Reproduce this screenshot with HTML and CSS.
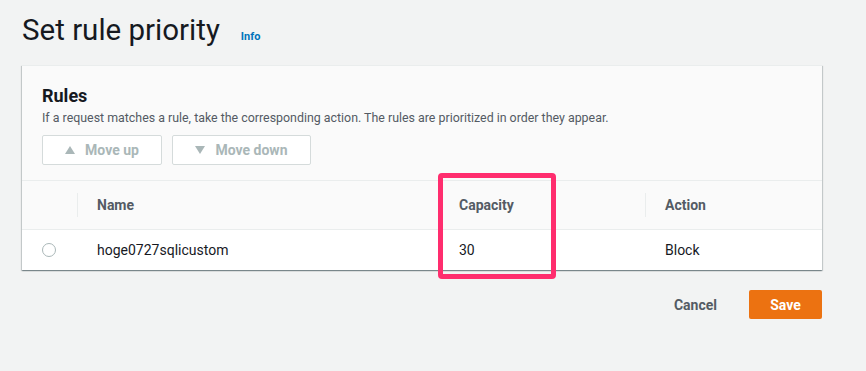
FILE: index.html
```html
<!DOCTYPE html>
<html lang="en">

<head>
    <meta charset="UTF-8">
    <meta name="viewport" content="width=device-width, initial-scale=1.0">
    <link rel="stylesheet" href="styles.css">
    <title>Set rule priority</title>
</head>

<body>
    <div class="page">
        <div class="page-header">
            <h1 class="page-title">Set rule priority</h1>
            <a href="#" class="info-link">Info</a>
        </div>

        <div class="card">
            <div class="card-header">
                <h2 class="card-title">Rules</h2>
                <p class="card-desc">If a request matches a rule, take the corresponding action. The rules are prioritized in order they appear.</p>
                <div class="button-group">
                    <button type="button" class="btn-disabled btn-up" disabled>
                        <svg class="caret" width="10" height="8" viewBox="0 0 10 8"><path d="M5 0 L10 8 L0 8 Z" fill="currentColor"/></svg>Move up
                    </button>
                    <button type="button" class="btn-disabled btn-down" disabled>
                        <svg class="caret" width="10" height="8" viewBox="0 0 10 8"><path d="M0 0 L10 0 L5 8 Z" fill="currentColor"/></svg>Move down
                    </button>
                </div>
            </div>

            <div class="table">
                <div class="row head-row">
                    <div class="cell col-select"></div>
                    <div class="cell col-name"><span class="sep"></span>Name</div>
                    <div class="cell col-capacity"><span class="sep"></span>Capacity</div>
                    <div class="cell col-action"><span class="sep"></span>Action</div>
                </div>
                <div class="row body-row">
                    <div class="cell col-select"><span class="radio"></span></div>
                    <div class="cell col-name">hoge0727sqlicustom</div>
                    <div class="cell col-capacity">30</div>
                    <div class="cell col-action">Block</div>
                </div>
            </div>

            <div class="highlight"></div>
        </div>

        <div class="actions">
            <button type="button" class="btn-link">Cancel</button>
            <button type="button" class="btn-primary">Save</button>
        </div>
    </div>
</body>

</html>
```

FILE: styles.css
```css
* {
    margin: 0;
    padding: 0;
    box-sizing: border-box;
}

body {
    font-family: Roboto, 'Liberation Sans', sans-serif;
    background-color: #f2f3f3;
    color: #16191f;
    font-size: 14px;
}

.page {
    padding: 11px 44px 0 22px;
}

/* Header */
.page-header {
    display: flex;
    align-items: baseline;
    gap: 21px;
    height: 54px;
}

.page-title {
    font-size: 29.5px;
    font-weight: 400;
    line-height: 38px;
    color: #16191f;
}

.info-link {
    font-size: 11px;
    font-weight: 700;
    color: #0073bb;
    text-decoration: none;
}

/* Card */
.card {
    position: relative;
    background-color: #fafafa;
    box-shadow: 0 1px 1px 0 rgba(0, 28, 36, 0.3), 1px 1px 1px 0 rgba(0, 28, 36, 0.15), -1px 1px 1px 0 rgba(0, 28, 36, 0.15);
    border-top: 1px solid #eaeded;
}

.card-header {
    padding: 19px 20px 15px;
}

.card-title {
    font-size: 18px;
    font-weight: 700;
    line-height: 22px;
}

.card-desc {
    font-size: 12.4px;
    color: #545b64;
    line-height: 16px;
    margin-top: 3px;
}

.button-group {
    display: flex;
    gap: 10px;
    margin-top: 9px;
}

.btn-disabled {
    height: 30px;
    border: 1px solid #d5dbdb;
    border-radius: 2px;
    background-color: #ffffff;
    color: #aab7b8;
    font-family: inherit;
    font-size: 14px;
    font-weight: 700;
    display: flex;
    align-items: center;
    justify-content: center;
}

.btn-up {
    width: 120px;
}

.btn-down {
    width: 139px;
}

.caret {
    margin-right: 10px;
}

/* Table */
.row {
    display: flex;
    border-top: 1px solid #eaeded;
}

.head-row {
    height: 49px;
    background-color: #fafafa;
    color: #545b64;
    font-weight: 700;
}

.body-row {
    height: 41px;
    background-color: #ffffff;
}

.cell {
    display: flex;
    align-items: center;
    position: relative;
}

.col-select {
    width: 55px;
    padding-left: 20px;
}

.col-name {
    width: 362px;
    padding-left: 20px;
}

.col-capacity {
    width: 206px;
    padding-left: 20px;
}

.col-action {
    flex: 1;
    padding-left: 20px;
}

.sep {
    position: absolute;
    left: 0;
    top: 12px;
    bottom: 12px;
    border-left: 1px solid #eaeded;
}

.radio {
    width: 14px;
    height: 14px;
    border: 1px solid #aab7b8;
    border-radius: 50%;
    background-color: #ffffff;
}

/* Annotation */
.highlight {
    position: absolute;
    left: 416px;
    top: 107px;
    width: 118px;
    height: 106px;
    border: 5px solid #ff2d6e;
    border-radius: 4px;
}

/* Footer actions */
.actions {
    display: flex;
    justify-content: flex-end;
    align-items: center;
    gap: 32px;
    margin-top: 20px;
}

.btn-link {
    border: none;
    background: none;
    color: #545b64;
    font-family: inherit;
    font-size: 14px;
    font-weight: 700;
}

.btn-primary {
    width: 73px;
    height: 29px;
    border: none;
    border-radius: 2px;
    background-color: #ec7211;
    color: #ffffff;
    font-family: inherit;
    font-size: 14px;
    font-weight: 700;
}
```
